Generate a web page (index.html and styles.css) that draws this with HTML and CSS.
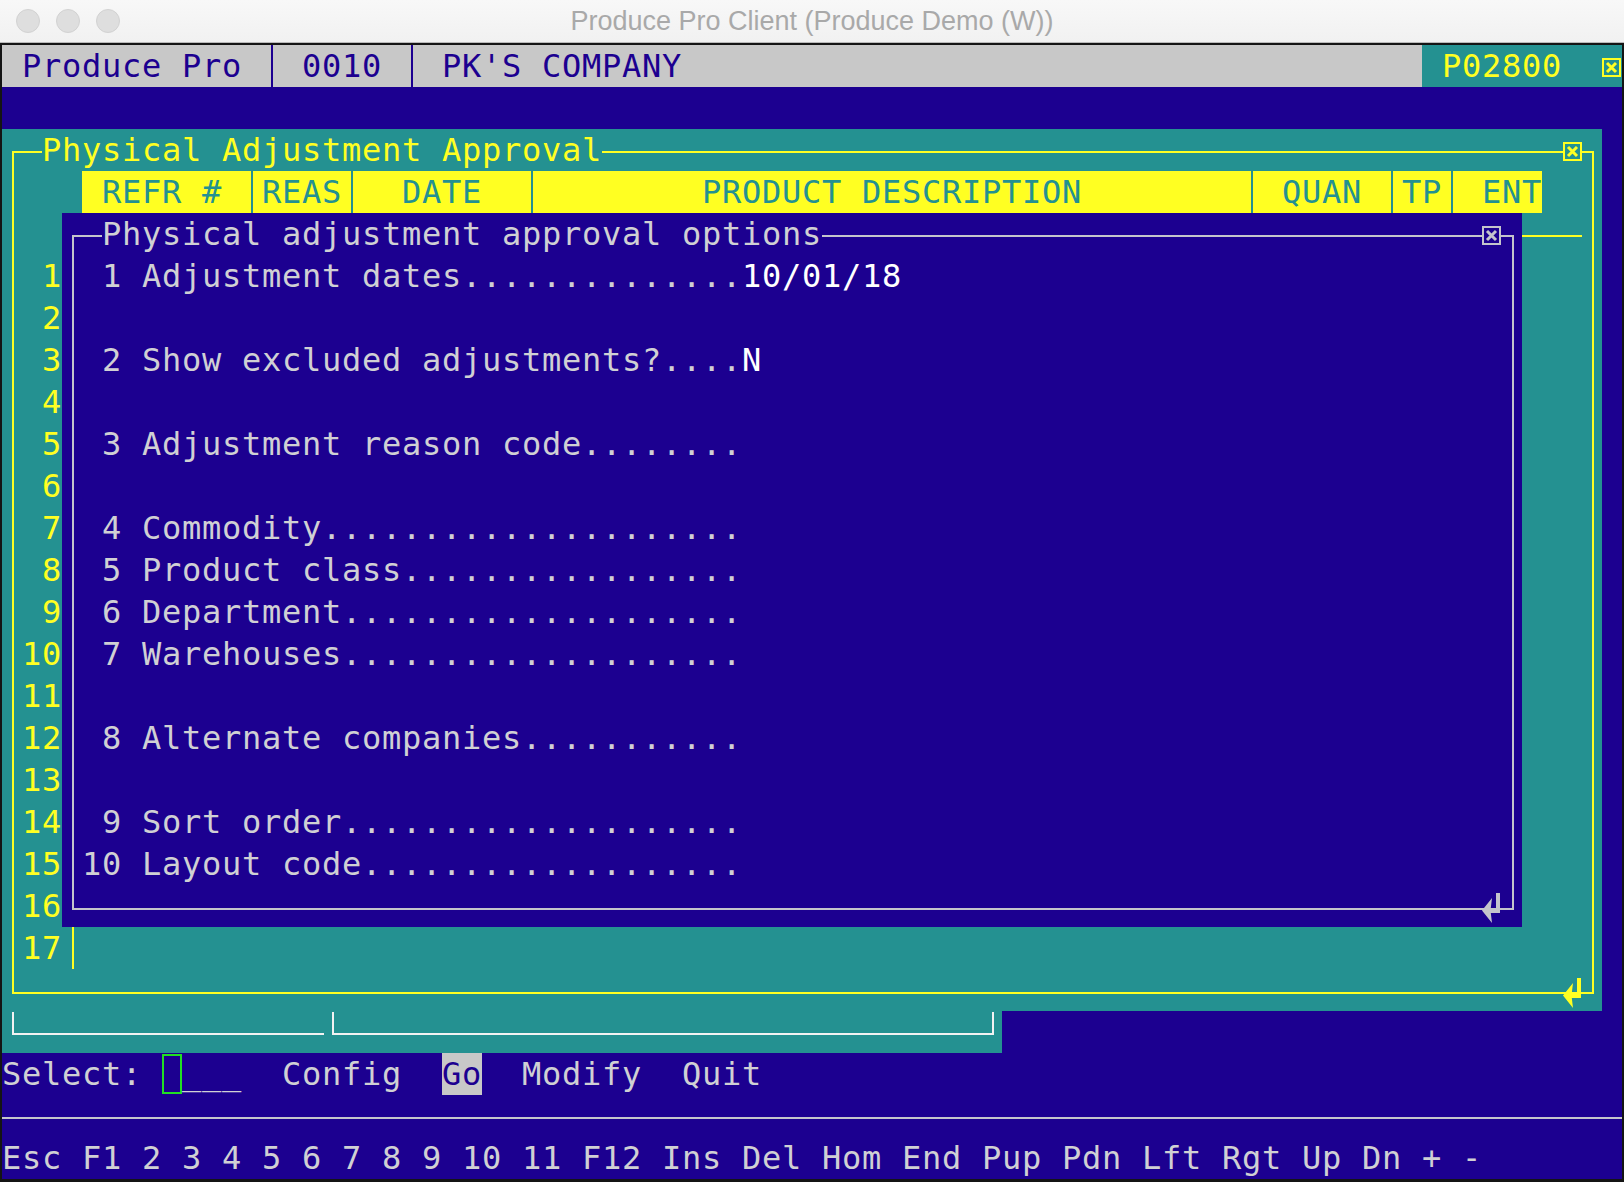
FILE: index.html
```html
<!DOCTYPE html>
<html>
<head>
<meta charset="utf-8">
<title>Produce Pro Client</title>
<link rel="stylesheet" href="styles.css">
</head>
<body>
<div class="window">
  <div class="titlebar">
    <div class="lights"><span class="light"></span><span class="light"></span><span class="light"></span></div>
    <div class="title">Produce Pro Client (Produce Demo (W))</div>
    <div></div>
  </div>
  <div class="frame-wrap">
    <div class="screen">
      <div class="hdr">
        <span class="tx hseg hseg-name"> Produce Pro</span><span class="hsep"></span><span class="tx hseg hseg-co"> 0010</span><span class="hsep"></span><span class="tx hseg"> PK'S COMPANY</span>
      </div>
      <div class="hdr-prog">
        <span class="tx"> P02800</span>
        <svg class="xbox xbox-teal" viewBox="0 0 19 19" width="19" height="19"><rect x="1" y="1" width="17" height="17" fill="none" stroke="currentColor" stroke-width="2"/><path d="M5 5L14 14M14 5L5 14" stroke="currentColor" stroke-width="3"/></svg>
      </div>

      <div class="twin">
        <div class="tframe"></div>
        <div class="tx ttitle">Physical Adjustment Approval</div>
        <div class="tclose"><svg class="xbox xbox-teal" viewBox="0 0 19 19" width="19" height="19"><rect x="1" y="1" width="17" height="17" fill="none" stroke="currentColor" stroke-width="2"/><path d="M5 5L14 14M14 5L5 14" stroke="currentColor" stroke-width="3"/></svg></div>
        <div class="colhdr">
          <span class="tx cw8"> REFR #</span><span class="csep"></span><span class="tx cw4">REAS</span><span class="csep"></span><span class="tx cw8">  DATE</span><span class="csep"></span><span class="tx cw35">        PRODUCT DESCRIPTION</span><span class="csep"></span><span class="tx cw6"> QUAN</span><span class="csep"></span><span class="tx cw2">TP</span><span class="csep"></span><span class="tx cw4"> ENT</span>
        </div>
        <div class="lnums">
          <div class="lrow">1</div><div class="lrow">2</div><div class="lrow">3</div><div class="lrow">4</div><div class="lrow">5</div><div class="lrow">6</div><div class="lrow">7</div><div class="lrow">8</div><div class="lrow">9</div><div class="lrow">10</div><div class="lrow">11</div><div class="lrow">12</div><div class="lrow">13</div><div class="lrow">14</div><div class="lrow">15</div><div class="lrow">16</div><div class="lrow">17</div>
        </div>
        <div class="tvline"></div>
        <div class="thline"></div>
        <div class="tenter"><svg viewBox="0 0 19 30" width="19" height="30"><path d="M14 0h4v20H8v-5h6z" fill="currentColor"/><path d="M0 17.5L10 5L8.5 17.5L10 30Z" fill="currentColor"/></svg></div>
      </div>

      <div class="dlg">
        <div class="dframe"></div>
        <div class="tx dtitle">Physical adjustment approval options</div>
        <div class="dclose"><svg class="xbox xbox-blue" viewBox="0 0 19 19" width="19" height="19"><rect x="1" y="1" width="17" height="17" fill="none" stroke="currentColor" stroke-width="2"/><path d="M5 5L14 14M14 5L5 14" stroke="currentColor" stroke-width="3"/></svg></div>
        <div class="dopts">
          <div class="tx oline"> 1 Adjustment dates..............<span class="val">10/01/18</span></div>
          <div class="tx oline"></div>
          <div class="tx oline"> 2 Show excluded adjustments?....<span class="val">N</span></div>
          <div class="tx oline"></div>
          <div class="tx oline"> 3 Adjustment reason code........</div>
          <div class="tx oline"></div>
          <div class="tx oline"> 4 Commodity.....................</div>
          <div class="tx oline"> 5 Product class.................</div>
          <div class="tx oline"> 6 Department....................</div>
          <div class="tx oline"> 7 Warehouses....................</div>
          <div class="tx oline"></div>
          <div class="tx oline"> 8 Alternate companies...........</div>
          <div class="tx oline"></div>
          <div class="tx oline"> 9 Sort order....................</div>
          <div class="tx oline">10 Layout code...................</div>
        </div>
        <div class="denter"><svg viewBox="0 0 19 30" width="19" height="30"><path d="M14 0h4v20H8v-5h6z" fill="currentColor"/><path d="M0 17.5L10 5L8.5 17.5L10 30Z" fill="currentColor"/></svg></div>
      </div>

      <div class="bwin">
        <div class="br1"></div>
        <div class="br2"></div>
      </div>

      <div class="sel">
        <span class="tx">Select: </span><span class="cursor"></span><span class="tx">___  Config  </span><span class="tx go">Go</span><span class="tx">  Modify  Quit</span>
      </div>
      <div class="hr"></div>
      <div class="tx fkeys">Esc F1 2 3 4 5 6 7 8 9 10 11 F12 Ins Del Hom End Pup Pdn Lft Rgt Up Dn + -</div>
    </div>
  </div>
</div>
</body>
</html>
```

FILE: styles.css
```css
* { box-sizing: border-box; margin: 0; padding: 0; }
html, body { width: 1624px; height: 1182px; overflow: hidden; background: #111; }

.window {
  width: 1624px;
  height: 1182px;
  display: flex;
  flex-direction: column;
  background: #141414;
}

/* macOS title bar */
.titlebar {
  height: 43px;
  flex: none;
  display: grid;
  grid-template-columns: 1fr auto 1fr;
  align-items: center;
  background: linear-gradient(#f8f8f8, #f1f1f1);
  border-bottom: 1px solid #b9b9b9;
}
.lights { display: flex; gap: 16px; padding-left: 16px; }
.light {
  width: 24px; height: 24px; border-radius: 50%;
  background: #dedede;
  border: 1px solid #d2d2d2;
}
.title {
  font-family: "Liberation Sans", Arial, sans-serif;
  font-size: 27px;
  color: #a9a9a9;
  white-space: nowrap;
}

.frame-wrap { padding: 2px 2px 3px 2px; flex: none; }

/* terminal screen: 81 x 27 character cells */
.screen {
  display: grid;
  grid-template-columns: repeat(81, 20px);
  grid-template-rows: repeat(27, 42px);
  background: #1c0090;
  font-family: "DejaVu Sans Mono", monospace;
  font-size: 32px;
  line-height: 42px;
  letter-spacing: 0.734px;
  color: #d0d0d4;
}
.tx { white-space: pre; }

/* header row */
.hdr {
  grid-row: 1; grid-column: 1 / 72;
  display: flex;
  background: #c8c8c8;
  color: #1c0090;
}
.hseg-name { width: 260px; }
.hseg-co { width: 120px; }
.hsep { width: 20px; display: flex; justify-content: center; }
.hsep::before { content: ""; width: 2px; background: #1c0090; }

.hdr-prog {
  grid-row: 1; grid-column: 72 / 82;
  display: flex;
  align-items: flex-start;
  justify-content: space-between;
  background: #249191;
  color: #ffff22;
}

.xbox { display: block; flex: none; }
.xbox-teal { background: #249191; color: #ffff22; margin-top: 13px; }
.xbox-blue { background: #1c0090; color: #c4c4cc; }
.hdr-prog .xbox { margin-right: 1px; }

/* teal window */
.twin {
  grid-row: 3 / 24; grid-column: 1 / 81;
  display: grid;
  grid-template-columns: repeat(80, 20px);
  grid-template-rows: repeat(21, 42px);
  background: #249191;
  color: #ffff22;
}
.tframe {
  grid-area: 1 / 1 / -1 / -1;
  margin: 22px 8px 17px 10px;
  border: 2px solid #ffff22;
}
.ttitle { grid-row: 1; grid-column: 3 / 31; background: #249191; }
.tclose { grid-row: 1; grid-column: 79; padding-left: 1px; }

.colhdr {
  grid-row: 2; grid-column: 5 / 78;
  display: flex;
  background: #ffff22;
  color: #249191;
}
.cw2 { width: 40px; }
.cw4 { width: 80px; }
.cw6 { width: 120px; }
.cw8 { width: 160px; }
.cw35 { width: 700px; }
.csep { width: 20px; display: flex; justify-content: center; }
.csep::before { content: ""; width: 2px; background: #249191; }

.lnums { grid-row: 4 / 21; grid-column: 2 / 4; text-align: right; }
.lrow { height: 42px; white-space: pre; }

.tvline {
  grid-row: 3 / 21; grid-column: 4;
  width: 2px; margin-left: 10px;
  background: #ffff22;
}
.thline {
  grid-row: 3; grid-column: 77 / 80;
  align-self: start;
  height: 2px; margin-top: 22px;
  background: #ffff22;
}
.tenter { grid-row: 21; grid-column: 79; padding: 9px 0 0 1px; color: #ffff22; }
.tenter svg, .denter svg { display: block; }

/* options dialog */
.dlg {
  grid-row: 5 / 22; grid-column: 4 / 77;
  display: grid;
  grid-template-columns: repeat(73, 20px);
  grid-template-rows: repeat(17, 42px);
  background: #1c0090;
  color: #d0d0d4;
}
.dframe {
  grid-area: 1 / 1 / -1 / -1;
  margin: 22px 8px 17px 10px;
  border: 2px solid #c4c4cc;
}
.dtitle { grid-row: 1; grid-column: 3 / 39; background: #1c0090; }
.dclose { grid-row: 1; grid-column: 72; padding-top: 13px; }
.dopts { grid-row: 2 / 17; grid-column: 2 / -1; }
.oline { height: 42px; }
.val { color: #ffffff; }
.denter { grid-row: 17; grid-column: 72; padding-top: 8px; color: #c4c4cc; }

/* bottom bracket window */
.bwin {
  grid-row: 24; grid-column: 1 / 51;
  display: flex;
  align-items: flex-start;
  gap: 8px;
  padding-left: 10px;
  background: #249191;
}
.br1 {
  width: 312px; height: 23px; margin-top: 1px;
  border-left: 2px solid #f2f2f2;
  border-bottom: 2px solid #f2f2f2;
}
.br2 {
  width: 662px; height: 23px; margin-top: 1px;
  border: 2px solid #f2f2f2;
  border-top: 0;
}

/* select line */
.sel { grid-row: 25; grid-column: 1 / -1; display: flex; align-items: flex-start; }
.cursor {
  width: 20px; height: 40px; margin-top: 1px;
  border: 2px solid #22e022;
}
.go { background: #c8c8c8; color: #1c0090; height: 42px; }

.hr {
  grid-row: 26; grid-column: 1 / -1;
  align-self: start;
  height: 2px; margin-top: 22px;
  background: #c4c4cc;
}
.fkeys { grid-row: 27; grid-column: 1 / -1; }
```
